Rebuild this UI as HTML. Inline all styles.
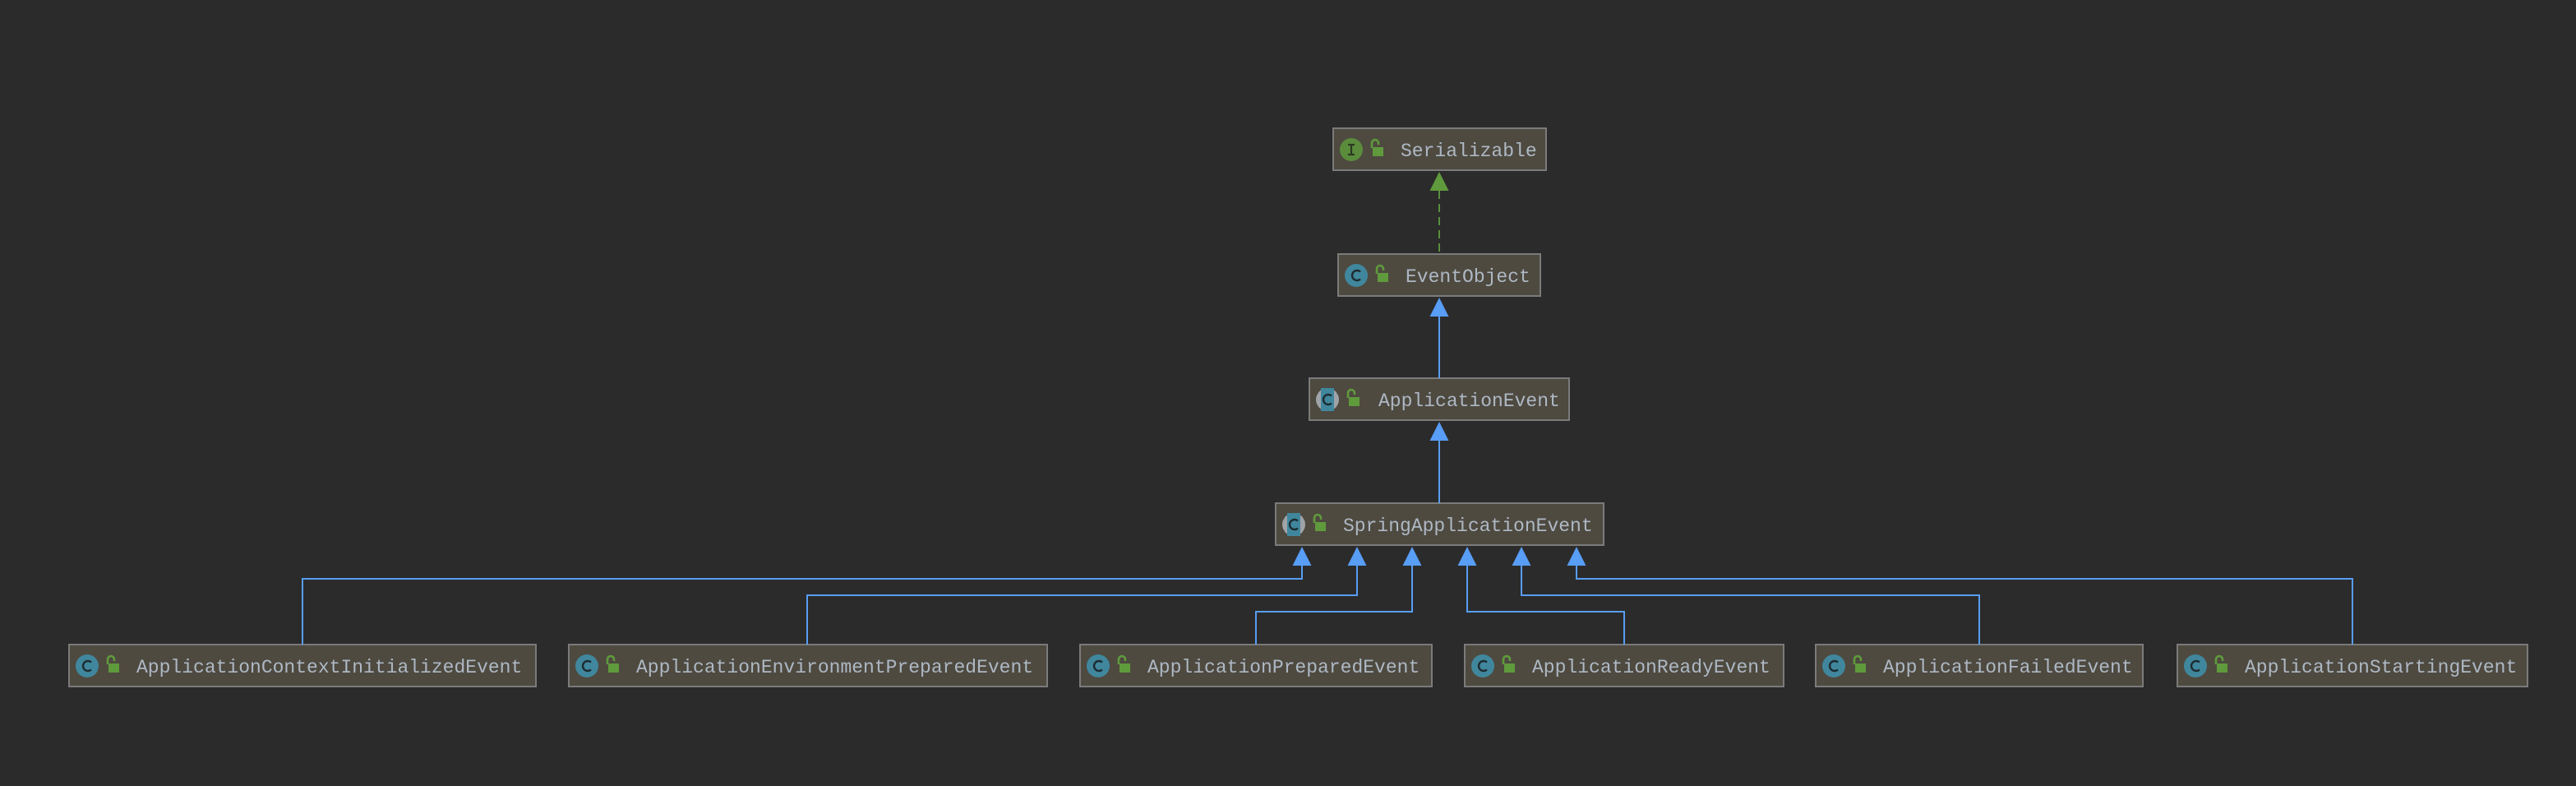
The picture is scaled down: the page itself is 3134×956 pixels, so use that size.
<!DOCTYPE html>
<html><head><meta charset="utf-8"><style>
html,body{margin:0;padding:0;background:#2b2b2b;}
svg{display:block}
text{font-family:"Liberation Mono","DejaVu Sans Mono",monospace;font-size:23px;fill:#aeb8c4}
</style></head><body>
<svg width="3134" height="956" viewBox="0 0 3134 956" xmlns="http://www.w3.org/2000/svg">
<defs>
<g id="lock"><path d="M47 -2 V-8 A4 4 0 0 1 55 -8 V-6" fill="none" stroke="#5f9a3c" stroke-width="2.6"/><rect x="48" y="-3" width="13" height="11" fill="#5f9a3c"/></g>
<g id="ic"><circle cx="22" cy="0" r="14" fill="#40879d"/><path d="M27 -4.5 A6 6 0 1 0 27 4.5" fill="none" stroke="#1e2b30" stroke-width="2.4"/></g>
<g id="ia"><circle cx="22" cy="0" r="14" fill="#a0a4a8"/><rect x="14" y="-14" width="16" height="28" fill="#40879d"/><path d="M10 -8 A10 10 0 0 0 10 8 M34 -8 A10 10 0 0 1 34 8" fill="none" stroke="#4e4a40" stroke-width="2"/><path d="M27 -4.5 A6 6 0 1 0 27 4.5" fill="none" stroke="#1e2b30" stroke-width="2.4"/></g>
<g id="ii"><circle cx="22" cy="0" r="14" fill="#5b8c3c"/><path d="M18 -6 H26 M22 -6 V6 M18 6 H26" stroke="#2a3a22" stroke-width="2.2"/></g>
</defs>
<g fill="#4e4a40" stroke="#7b7b7b" stroke-width="2">
<rect x="1622" y="156" width="259" height="51"/>
<rect x="1628" y="309" width="246" height="51"/>
<rect x="1593" y="460" width="316" height="51"/>
<rect x="1552" y="612" width="399" height="51"/>
<rect x="84" y="784" width="568" height="51"/>
<rect x="692" y="784" width="582" height="51"/>
<rect x="1314" y="784" width="428" height="51"/>
<rect x="1782" y="784" width="388" height="51"/>
<rect x="2209" y="784" width="398" height="51"/>
<rect x="2649" y="784" width="426" height="51"/>
</g>
<use href="#ii" x="1622" y="182"/><use href="#lock" x="1622" y="182"/>
<use href="#ic" x="1628" y="335"/><use href="#lock" x="1628" y="335"/>
<use href="#ia" x="1593" y="486"/><use href="#lock" x="1593" y="486"/>
<use href="#ia" x="1552" y="638"/><use href="#lock" x="1552" y="638"/>
<use href="#ic" x="84" y="810"/><use href="#lock" x="84" y="810"/>
<use href="#ic" x="692" y="810"/><use href="#lock" x="692" y="810"/>
<use href="#ic" x="1314" y="810"/><use href="#lock" x="1314" y="810"/>
<use href="#ic" x="1782" y="810"/><use href="#lock" x="1782" y="810"/>
<use href="#ic" x="2209" y="810"/><use href="#lock" x="2209" y="810"/>
<use href="#ic" x="2649" y="810"/><use href="#lock" x="2649" y="810"/>
<text x="1704" y="190">Serializable</text>
<text x="1710" y="343">EventObject</text>
<text x="1677" y="494">ApplicationEvent</text>
<text x="1634" y="646">SpringApplicationEvent</text>
<text x="166" y="818">ApplicationContextInitializedEvent</text>
<text x="774" y="818">ApplicationEnvironmentPreparedEvent</text>
<text x="1396" y="818">ApplicationPreparedEvent</text>
<text x="1864" y="818">ApplicationReadyEvent</text>
<text x="2291" y="818">ApplicationFailedEvent</text>
<text x="2731" y="818">ApplicationStartingEvent</text>
<!-- green dashed -->
<line x1="1751" y1="232" x2="1751" y2="309" stroke="#5a8f3c" stroke-width="2" stroke-dasharray="10 6"/>
<polygon points="1751,209 1762.5,232 1739.5,232" fill="#5f9a3c"/>
<g stroke="#589df6" stroke-width="2" fill="none">
<path d="M1751 385 V460"/><path d="M1751 536 V612"/>
<path d="M1584 688 V704 H368 V784"/>
<path d="M1651 688 V724 H982 V784"/>
<path d="M1718 688 V744 H1528 V784"/>
<path d="M1785 688 V744 H1976 V784"/>
<path d="M1851 688 V724 H2408 V784"/>
<path d="M1918 688 V704 H2862 V784"/>
</g>
<g fill="#589df6">
<polygon points="1751,362 1762.5,385 1739.5,385"/>
<polygon points="1751,513 1762.5,536 1739.5,536"/>
<polygon points="1584,665 1595.5,688 1572.5,688"/>
<polygon points="1651,665 1662.5,688 1639.5,688"/>
<polygon points="1718,665 1729.5,688 1706.5,688"/>
<polygon points="1785,665 1796.5,688 1773.5,688"/>
<polygon points="1851,665 1862.5,688 1839.5,688"/>
<polygon points="1918,665 1929.5,688 1906.5,688"/>
</g>
</svg>
</body></html>
